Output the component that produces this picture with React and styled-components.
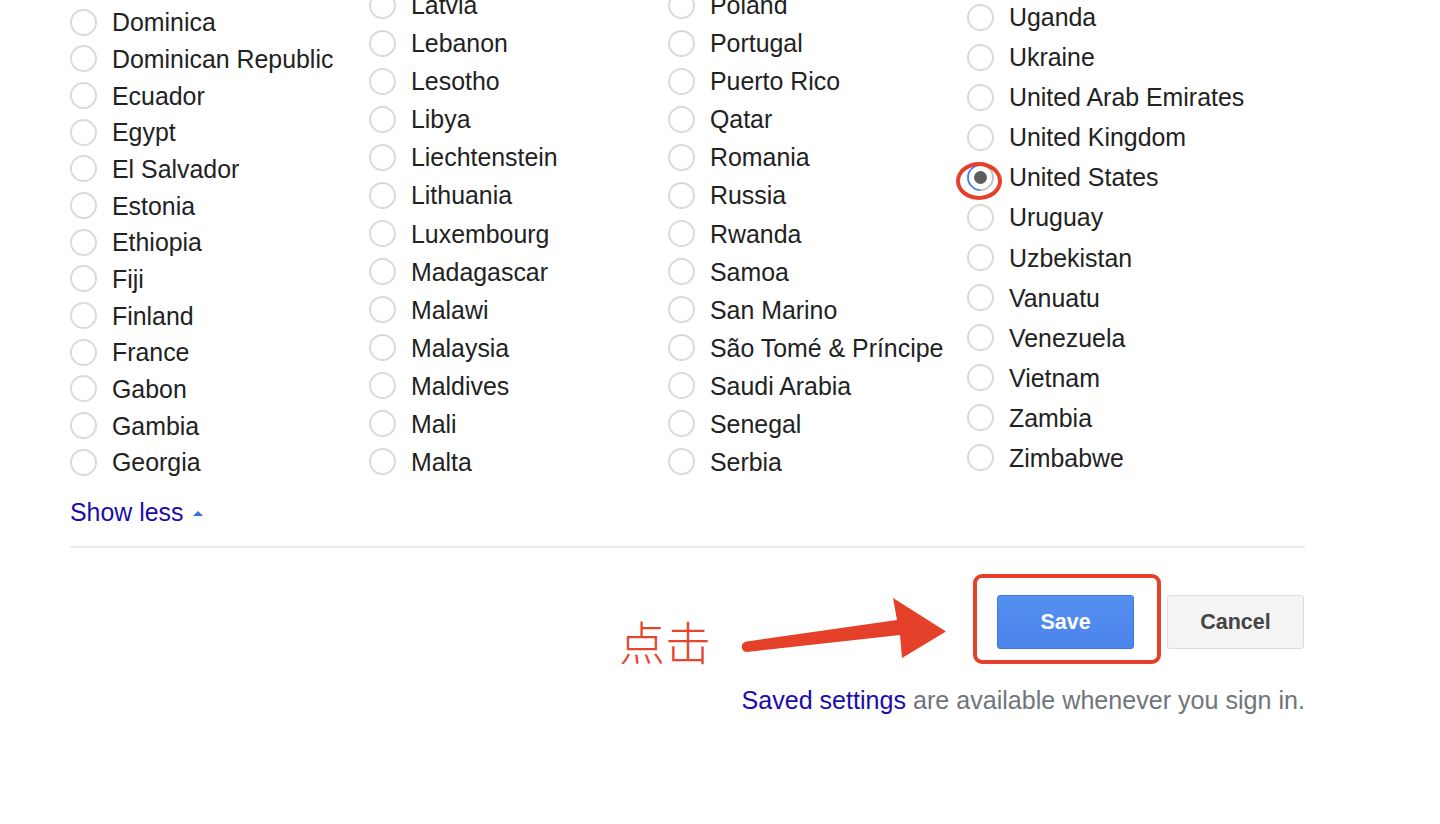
import React from "react";
import styled, { createGlobalStyle } from "styled-components";

const Global = createGlobalStyle`
  html, body { margin: 0; padding: 0; background: #fff; overflow: hidden; }
  body { font-family: "Liberation Sans", Arial, sans-serif; color: #222; }
`;

const Page = styled.div`
  width: 1440px;
  height: 824px;
  box-sizing: border-box;
  padding: 0 135px 0 70px;
  display: flex;
  flex-direction: column;
`;

const Columns = styled.div`
  display: grid;
  grid-template-columns: repeat(4, 299px);
  height: 480px;
  align-items: start;
`;

const Column = styled.div`
  display: flex;
  flex-direction: column;
  margin-top: ${(p) => p.$shift}px;
`;

const Row = styled.label`
  display: flex;
  align-items: center;
  gap: 15px;
  height: ${(p) => p.$h}px;
  font-size: 24.9px;
  color: #222;
  white-space: nowrap;
  padding-top: 1px;
  box-sizing: border-box;
`;

const RadioWrap = styled.span`
  position: relative;
  width: 27px;
  height: 27px;
  flex: none;
  margin-top: -1px;
`;

const Radio = styled.span`
  display: flex;
  align-items: center;
  justify-content: center;
  box-sizing: border-box;
  width: 27px;
  height: 27px;
  border-radius: 50%;
  border: 2px solid #dadada;
  background: #fff;
  ${(p) =>
    p.$checked &&
    `
    border-color: #c4c4c4 #c4c4c4 #4d7ff0 #4d7ff0;
    transform: rotate(45deg);
  `}
`;

const Dot = styled.span`
  width: 13px;
  height: 13px;
  border-radius: 50%;
  background: #5e5e5e;
`;

const RingMark = styled.span`
  position: absolute;
  left: -11px;
  top: -2px;
  width: 46px;
  height: 38px;
  box-sizing: border-box;
  border: 4px solid #e5402a;
  border-radius: 50%;
  pointer-events: none;
`;

const ShowLess = styled.a`
  margin-top: 17px;
  height: 30px;
  line-height: 30px;
  font-size: 24.9px;
  color: #1a0dab;
  display: flex;
  align-items: center;
  gap: 10px;
  text-decoration: none;
  cursor: pointer;
`;

const Caret = styled.span`
  width: 0;
  height: 0;
  border-left: 5px solid transparent;
  border-right: 5px solid transparent;
  border-bottom: 5px solid #3f6fd8;
  margin-top: 2px;
`;

const Divider = styled.div`
  margin-top: 19px;
  height: 2px;
  background: #ececec;
`;

const ButtonRow = styled.div`
  position: relative;
  margin-top: 47px;
  margin-right: 1px;
  display: flex;
  justify-content: flex-end;
  gap: 33px;
`;

const SaveWrap = styled.div`
  position: relative;
`;

const Button = styled.button`
  width: 137px;
  height: 54px;
  border-radius: 3px;
  font-family: "Liberation Sans", Arial, sans-serif;
  font-weight: bold;
  font-size: 21.5px;
  cursor: pointer;
  ${(p) =>
    p.$primary
      ? `
    background: linear-gradient(#5490f0, #4b84ea);
    border: 1px solid #3c76e0;
    color: #fff;
  `
      : `
    background: #f4f4f4;
    border: 1.5px solid #dcdcdc;
    color: #444;
  `}
`;

const BoxMark = styled.span`
  position: absolute;
  left: -24px;
  top: -21px;
  width: 188px;
  height: 90px;
  box-sizing: border-box;
  border: 4px solid #e5402a;
  border-radius: 9px;
  pointer-events: none;
`;

const ClickLabel = styled.span`
  position: absolute;
  left: 549px;
  top: 22px;
  font-family: "Noto Sans CJK SC", sans-serif;
  font-weight: 300;
  font-size: 46px;
  line-height: 1;
  color: #e5452d;
`;

const Arrow = styled.svg`
  position: absolute;
  left: 670px;
  top: -5px;
`;

const Footer = styled.p`
  margin: 36px 0 0;
  text-align: right;
  font-size: 25.1px;
  line-height: 30px;
  color: #70757a;
`;

const FooterLink = styled.a`
  color: #1a0dab;
  text-decoration: none;
`;

const columns = [
  {
    shift: 4,
    h: 36.67,
    items: [
      "Dominica",
      "Dominican Republic",
      "Ecuador",
      "Egypt",
      "El Salvador",
      "Estonia",
      "Ethiopia",
      "Fiji",
      "Finland",
      "France",
      "Gabon",
      "Gambia",
      "Georgia",
    ],
  },
  {
    shift: -14,
    h: 38.08,
    items: [
      "Latvia",
      "Lebanon",
      "Lesotho",
      "Libya",
      "Liechtenstein",
      "Lithuania",
      "Luxembourg",
      "Madagascar",
      "Malawi",
      "Malaysia",
      "Maldives",
      "Mali",
      "Malta",
    ],
  },
  {
    shift: -14,
    h: 38.08,
    items: [
      "Poland",
      "Portugal",
      "Puerto Rico",
      "Qatar",
      "Romania",
      "Russia",
      "Rwanda",
      "Samoa",
      "San Marino",
      "São Tomé & Príncipe",
      "Saudi Arabia",
      "Senegal",
      "Serbia",
    ],
  },
  {
    shift: -3,
    h: 40.09,
    items: [
      "Uganda",
      "Ukraine",
      "United Arab Emirates",
      "United Kingdom",
      "United States",
      "Uruguay",
      "Uzbekistan",
      "Vanuatu",
      "Venezuela",
      "Vietnam",
      "Zambia",
      "Zimbabwe",
    ],
  },
];

const SELECTED = "United States";

export default function App() {
  return (
    <>
      <Global />
      <Page>
        <Columns>
          {columns.map((col, ci) => (
            <Column key={ci} $shift={col.shift}>
              {col.items.map((name) => {
                const checked = name === SELECTED;
                return (
                  <Row key={name} $h={col.h}>
                    <RadioWrap>
                      <Radio $checked={checked}>{checked && <Dot />}</Radio>
                      {checked && <RingMark />}
                    </RadioWrap>
                    {name}
                  </Row>
                );
              })}
            </Column>
          ))}
        </Columns>
        <ShowLess>
          Show less <Caret />
        </ShowLess>
        <Divider />
        <ButtonRow>
          <ClickLabel>点击</ClickLabel>
          <Arrow width="212" height="72" viewBox="740 590 212 72">
            <path
              d="M747 641.5 L897 620 L893 598 L946 631.5 L902 658 L900 635 L747 652 A5.25 5.25 0 0 1 747 641.5 Z"
              fill="#e5402a"
            />
          </Arrow>
          <SaveWrap>
            <Button $primary>Save</Button>
            <BoxMark />
          </SaveWrap>
          <Button>Cancel</Button>
        </ButtonRow>
        <Footer>
          <FooterLink>Saved settings</FooterLink> are available whenever you sign in.
        </Footer>
      </Page>
    </>
  );
}
